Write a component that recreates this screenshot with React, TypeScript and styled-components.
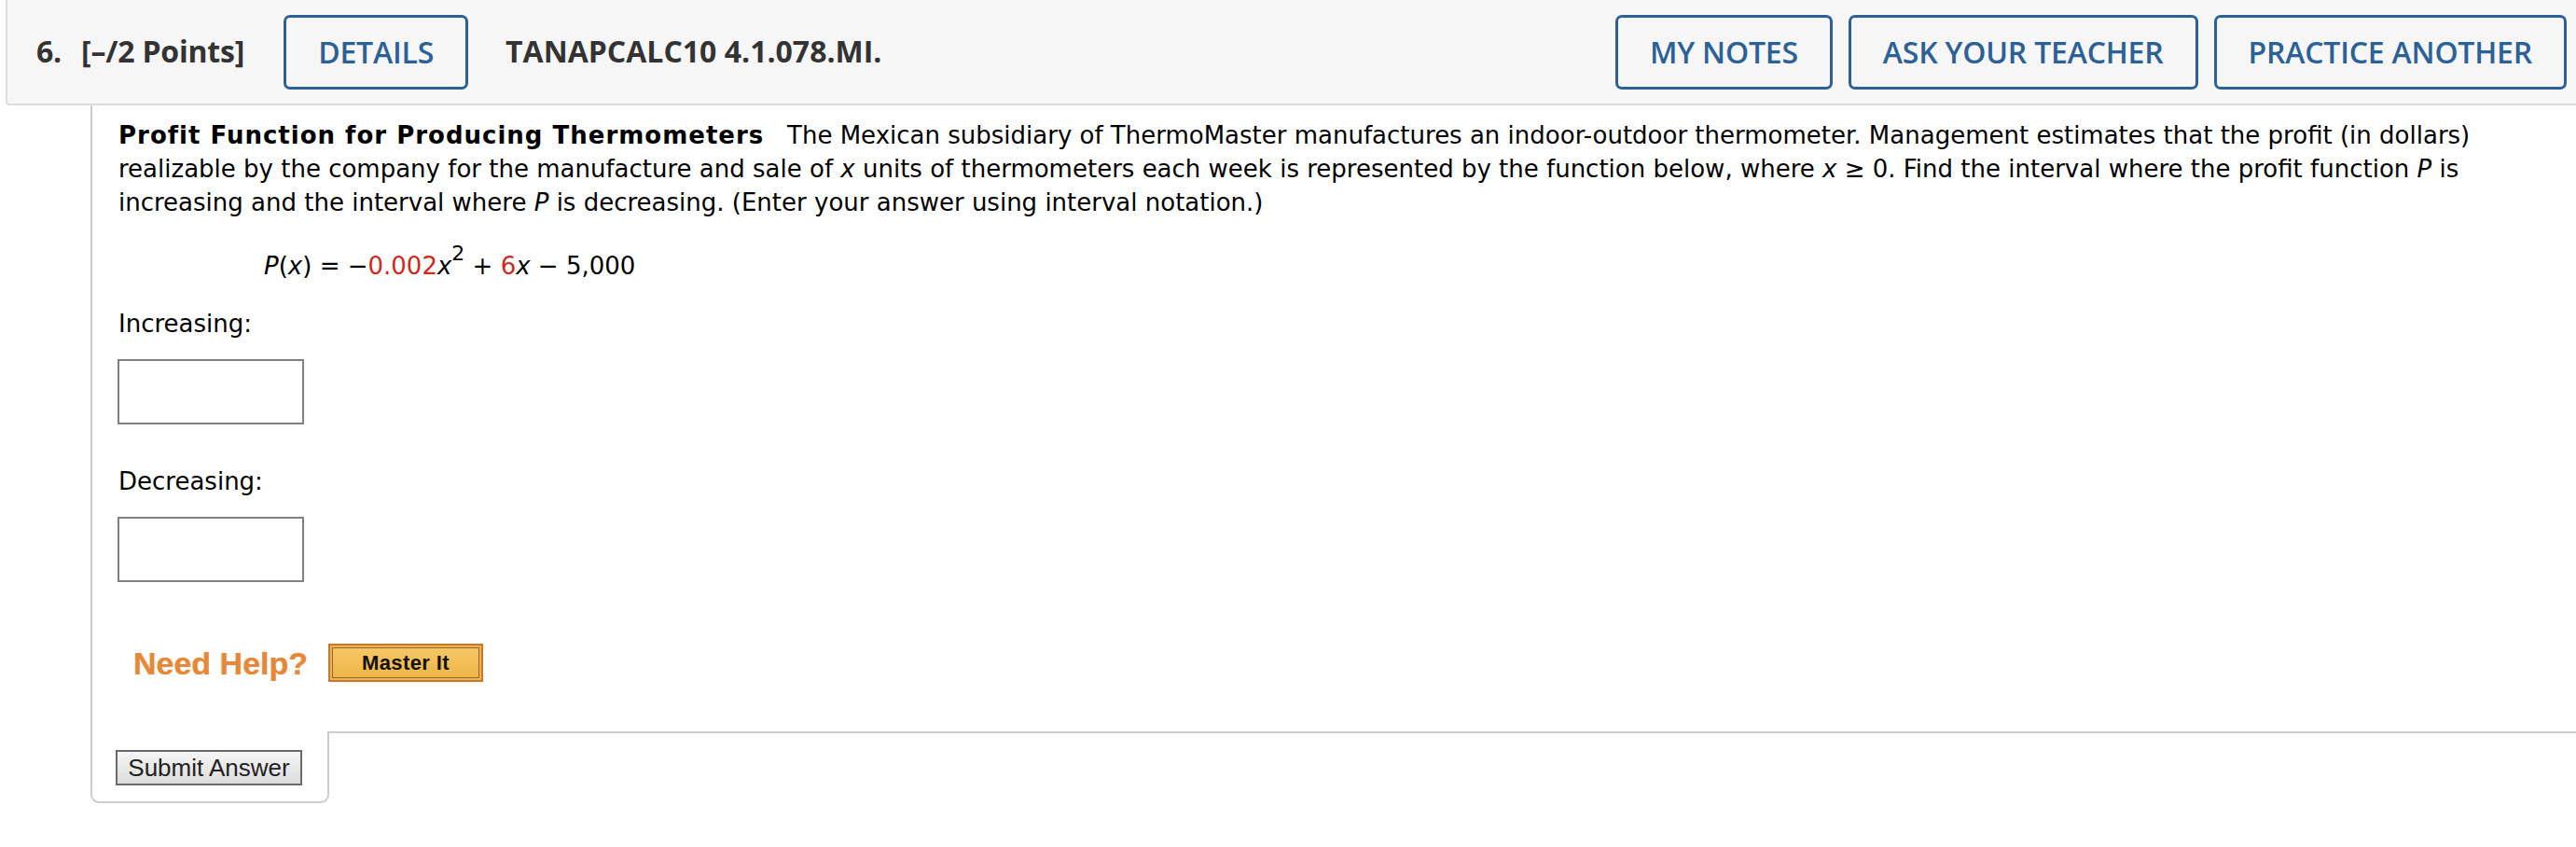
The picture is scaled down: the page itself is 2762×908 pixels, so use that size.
import styled, { createGlobalStyle } from 'styled-components';

const GlobalStyle = createGlobalStyle`
  body {
    margin: 0;
    background: #ffffff;
    font-family: 'DejaVu Sans', Verdana, sans-serif;
  }
`;

const blue = '#2b6195';

function App() {
  return (
    <Page>
      <GlobalStyle />
      <Header>
        <QuestionNumber>6.</QuestionNumber>
        <Points>[–/2 Points]</Points>
        <HeaderButton>DETAILS</HeaderButton>
        <QuestionCode>TANAPCALC10 4.1.078.MI.</QuestionCode>
        <HeaderActions>
          <HeaderButton>MY NOTES</HeaderButton>
          <HeaderButton>ASK YOUR TEACHER</HeaderButton>
          <HeaderButton>PRACTICE ANOTHER</HeaderButton>
        </HeaderActions>
      </Header>

      <QuestionBody>
        <Prompt>
          <strong>Profit Function for Producing Thermometers</strong>&nbsp;&nbsp; The Mexican subsidiary of
          ThermoMaster manufactures an indoor-outdoor thermometer. Management estimates that the profit (in
          dollars) realizable by the company for the manufacture and sale of <i>x</i> units of thermometers each
          week is represented by the function below, where <i>x</i> ≥ 0. Find the interval where the profit
          function <i>P</i> is increasing and the interval where <i>P</i> is decreasing. (Enter your answer using
          interval notation.)
        </Prompt>

        <Equation>
          <i>P</i>(<i>x</i>) = −<Red>0.002</Red>
          <i>x</i>
          <sup>2</sup> + <Red>6</Red>
          <i>x</i> − 5,000
        </Equation>

        <AnswerBlock $gap={26}>
          <AnswerLabel>Increasing:</AnswerLabel>
          <AnswerInput type='text' />
        </AnswerBlock>

        <AnswerBlock $gap={43}>
          <AnswerLabel>Decreasing:</AnswerLabel>
          <AnswerInput type='text' />
        </AnswerBlock>

        <HelpRow>
          <NeedHelp>Need Help?</NeedHelp>
          <MasterButton>Master It</MasterButton>
        </HelpRow>
      </QuestionBody>

      <Footer>
        <SubmitTab>
          <SubmitButton>Submit Answer</SubmitButton>
        </SubmitTab>
        <FooterRule />
      </Footer>
    </Page>
  );
}

export default App;

const Page = styled.div`
  width: 2762px;
  min-height: 908px;
`;

const Header = styled.div`
  margin-left: 6px;
  height: 111px;
  display: flex;
  align-items: center;
  padding-left: 31px;
  padding-right: 10px;
  background: #f6f6f6;
  border-left: 2px solid #dcdcdc;
  border-bottom: 2px solid #dcdcdc;
  border-bottom-left-radius: 4px;
  font-family: 'Open Sans', 'DejaVu Sans', sans-serif;
  color: #333333;
`;

const HeaderText = styled.span`
  font-size: 32px;
  font-weight: 700;
  letter-spacing: -0.2px;
  margin-top: -2px;
`;

const QuestionNumber = styled(HeaderText)``;

const Points = styled(HeaderText)`
  margin-left: 21px;
  margin-right: 42px;
`;

const QuestionCode = styled(HeaderText)`
  margin-left: 40px;
  letter-spacing: 0;
`;

const HeaderActions = styled.div`
  margin-left: auto;
  display: flex;
  gap: 17px;
`;

const HeaderButton = styled.button`
  height: 80px;
  padding: 0 34px;
  background: transparent;
  border: 3px solid ${blue};
  border-radius: 7px;
  color: ${blue};
  font-family: 'Open Sans', 'DejaVu Sans', sans-serif;
  font-size: 32px;
  font-weight: 600;
  letter-spacing: -0.2px;
  cursor: pointer;
`;

const QuestionBody = styled.div`
  margin-left: 97px;
  border-left: 2px solid #cccccc;
  padding: 14px 0 53px 28px;
  font-size: 26px;
  line-height: 36px;
  color: #000000;
`;

const Prompt = styled.p`
  margin: 0;
  width: 2560px;

  strong {
    font-weight: 700;
    letter-spacing: 1px;
  }
`;

const Equation = styled.p`
  margin: 32px 0 0;
  padding-left: 156px;
  height: 36px;

  sup {
    font-size: 22px;
    line-height: 0;
    vertical-align: 15px;
  }
`;

const Red = styled.span`
  color: #cc2a1e;
`;

const AnswerBlock = styled.div<{ $gap: number }>`
  margin-top: ${(p) => p.$gap}px;
`;

const AnswerLabel = styled.div``;

const AnswerInput = styled.input`
  display: block;
  box-sizing: border-box;
  width: 200px;
  height: 70px;
  margin-top: 20px;
  margin-left: -1px;
  border: 2px solid #808080;
  background: #ffffff;
  outline: none;
`;

const HelpRow = styled.div`
  display: flex;
  align-items: center;
  gap: 22px;
  margin-top: 66px;
  padding-left: 16px;
  height: 41px;
`;

const NeedHelp = styled.span`
  font-family: 'Liberation Sans', Arial, sans-serif;
  font-size: 34px;
  font-weight: 700;
  color: #e5883a;
  text-shadow: 0 0 1px rgba(229, 136, 58, 0.7);
  line-height: 1;
`;

const MasterButton = styled.button`
  box-sizing: border-box;
  width: 166px;
  height: 41px;
  padding: 0;
  border: 2px solid #c27a2e;
  box-shadow: inset 0 0 0 2px #f6b04c, inset 0 0 0 3px #8a6a3a;
  background: linear-gradient(#f7c867, #eeb445);
  font-family: 'Liberation Sans', Arial, sans-serif;
  font-size: 22px;
  font-weight: 700;
  letter-spacing: 0.4px;
  color: #111111;
  cursor: pointer;
`;

const Footer = styled.div`
  margin-left: 97px;
  display: flex;
`;

const SubmitTab = styled.div`
  box-sizing: border-box;
  width: 256px;
  height: 77px;
  padding: 20px 0 0 25px;
  border: 2px solid #cccccc;
  border-top: none;
  border-radius: 0 0 9px 9px;
`;

const FooterRule = styled.div`
  flex: 1;
  border-top: 2px solid #cccccc;
  margin-left: -2px;
`;

const SubmitButton = styled.button`
  box-sizing: border-box;
  width: 200px;
  height: 38px;
  padding: 0;
  border: 2px solid #6a6a6a;
  background: linear-gradient(#f5f5f5, #dcdcdc);
  font-family: 'Liberation Sans', Arial, sans-serif;
  font-size: 26px;
  color: #222222;
  line-height: 1;
  cursor: pointer;
`;
